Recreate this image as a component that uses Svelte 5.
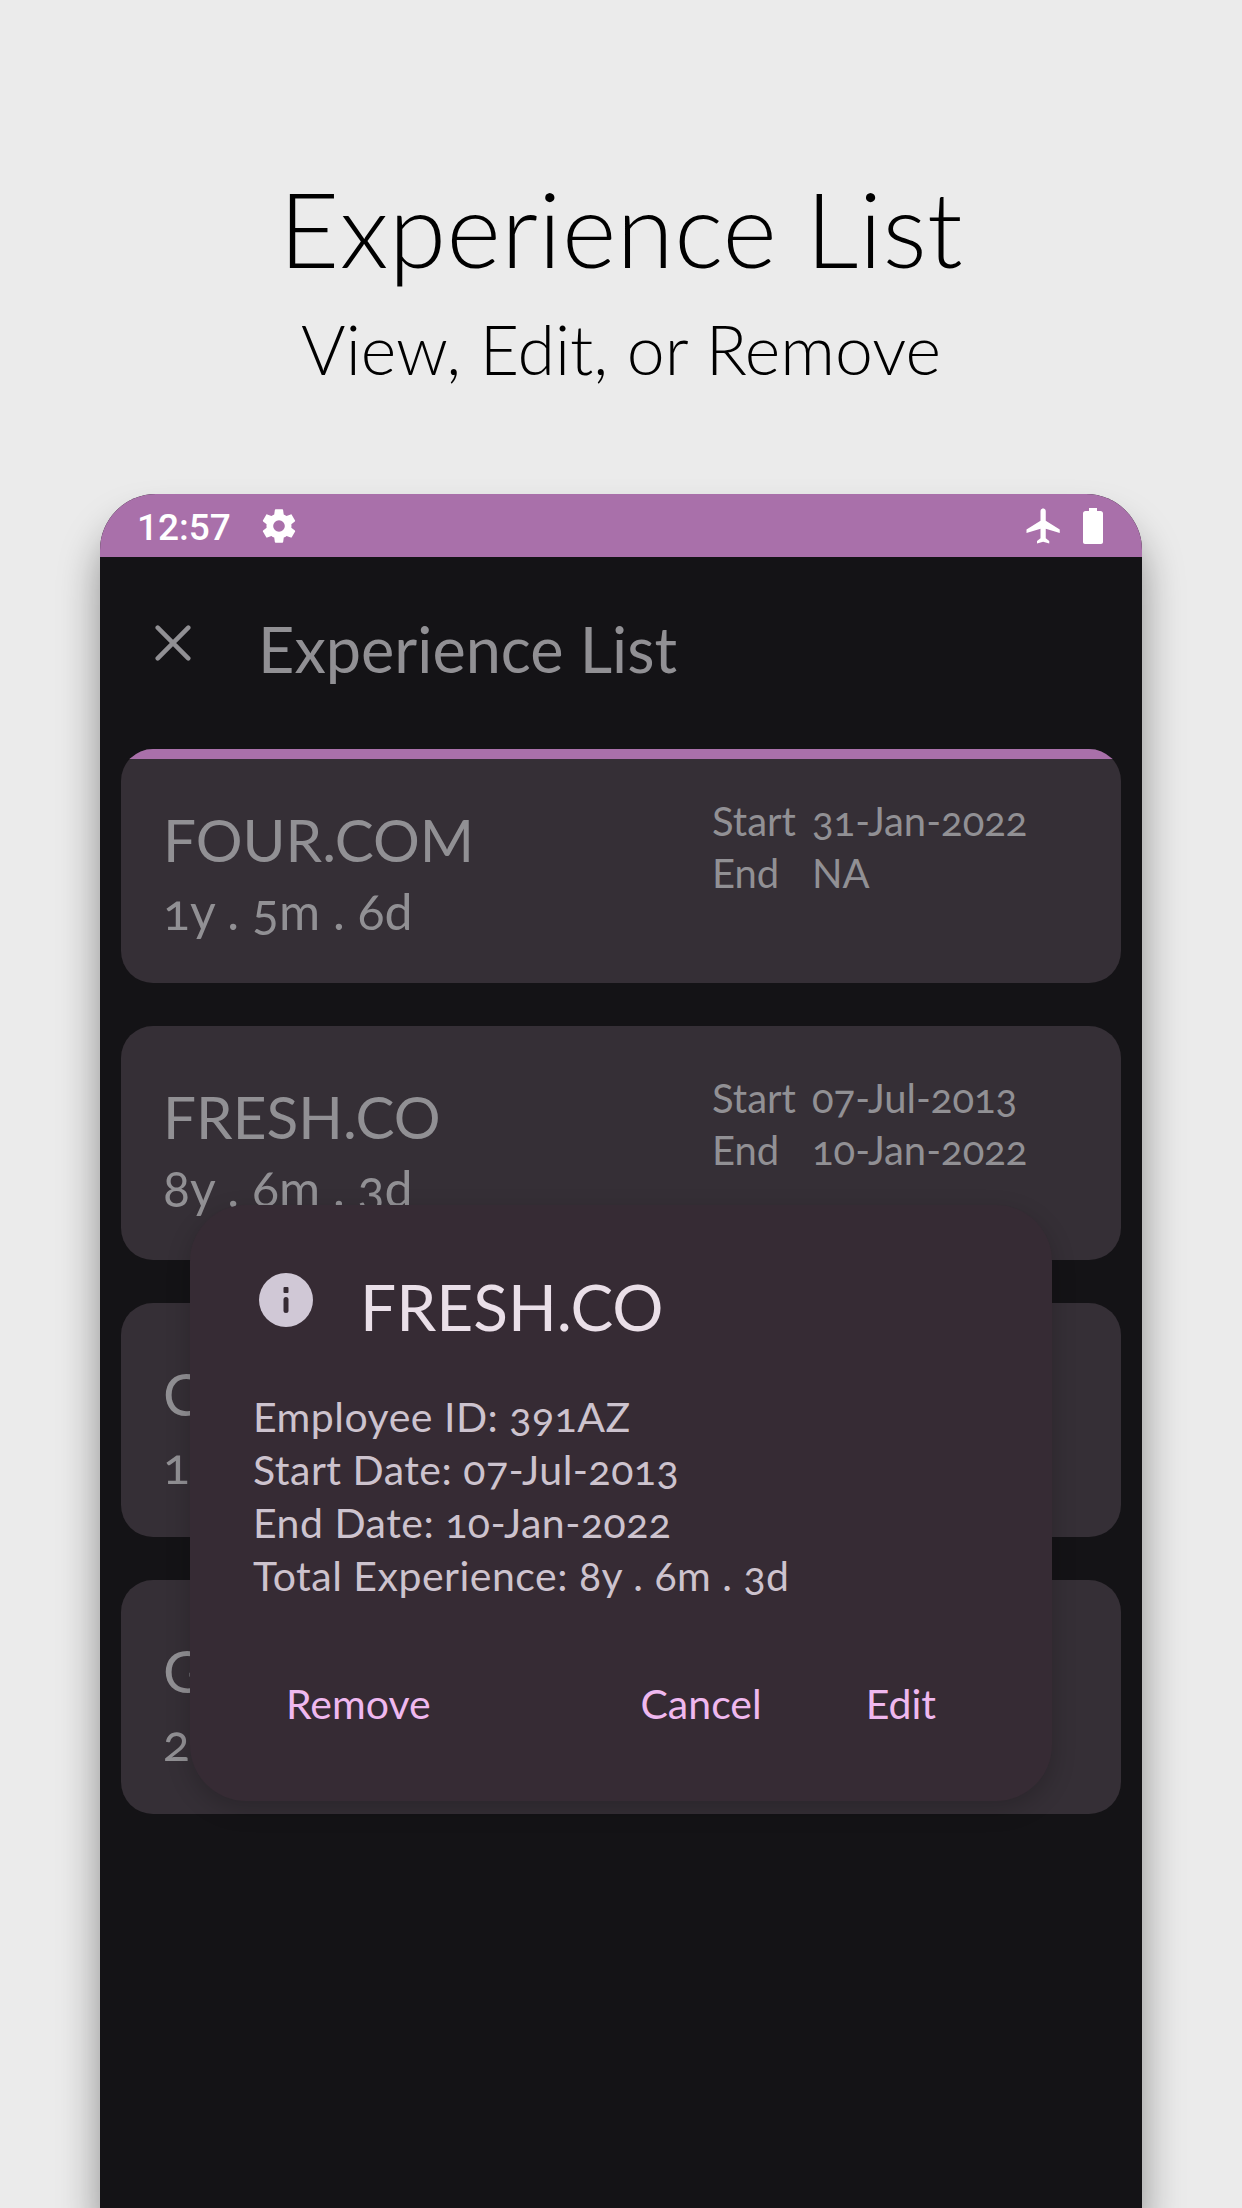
<script>
	const jobs = [
		{ name: 'FOUR.COM', span: '1y . 5m . 6d', start: '31-Jan-2022', end: 'NA', current: true },
		{ name: 'FRESH.CO', span: '8y . 6m . 3d', start: '07-Jul-2013', end: '10-Jan-2022' },
		{ name: 'CORE.IO', span: '1y . 2m . 4d', start: '02-May-2012', end: '06-Jul-2013' },
		{ name: 'GRID.NET', span: '2y . 1m . 9d', start: '20-Mar-2010', end: '29-Apr-2012' }
	];
</script>

<main class="page">
	<header class="hero">
		<h1>Experience List</h1>
		<p>View, Edit, or Remove</p>
	</header>

	<section class="phone">
		<div class="status">
			<span class="time">12:57</span>
			<svg class="gear" viewBox="0 0 24 24"><path d="M19.4 13c.04-.32.07-.66.07-1s-.03-.68-.07-1l2.1-1.65c.19-.15.24-.42.12-.64l-2-3.46c-.12-.22-.38-.3-.6-.22l-2.49 1c-.52-.4-1.08-.73-1.69-.98l-.38-2.65A.49.49 0 0 0 14 2h-4c-.25 0-.46.18-.49.42l-.38 2.65c-.61.25-1.17.59-1.69.98l-2.49-1c-.23-.09-.49 0-.61.22l-2 3.46c-.13.22-.07.49.12.64L4.57 11c-.04.32-.07.65-.07 1s.03.68.07 1l-2.11 1.65c-.19.15-.24.42-.12.64l2 3.46c.12.22.38.3.61.22l2.49-1c.52.4 1.08.73 1.69.98l.38 2.65c.03.24.24.42.49.42h4c.25 0 .46-.18.49-.42l.38-2.65c.61-.25 1.17-.59 1.69-.98l2.49 1c.23.09.49 0 .61-.22l2-3.46c.12-.22.07-.49-.12-.64L19.4 13zM12 15.5a3.5 3.5 0 1 1 0-7 3.5 3.5 0 0 1 0 7z"/></svg>
			<span class="spacer"></span>
			<svg class="plane" viewBox="0 0 24 24"><path d="M21 16v-2l-8-5V3.5c0-.83-.67-1.5-1.5-1.5S10 2.670 10 3.500V9l-8 5v2l8-2.500V19l-2 1.500V22l3.500-1 3.500 1v-1.500L13 19v-5.500l8 2.500z"/></svg>
			<svg class="battery" viewBox="0 0 20 36"><path d="M6 0h8v3h3.500C19 3 20 4 20 5.500V34c0 1.200-.8 2-2 2H2c-1.200 0-2-.8-2-2V5.500C0 4 1 3 2.500 3H6z"/></svg>
		</div>

		<div class="appbar">
			<svg class="close" viewBox="0 0 40 40"><path d="M3 3l34 34M37 3L3 37"/></svg>
			<h2>Experience List</h2>
		</div>

		<div class="list">
			{#each jobs as job (job.name)}
				<article class="card" class:current={job.current}>
					<div class="who">
						<h3>{job.name}</h3>
						<p>{job.span}</p>
					</div>
					<dl>
						<dt>Start</dt><dd>{job.start}</dd>
						<dt>End</dt><dd>{job.end}</dd>
					</dl>
				</article>
			{/each}
		</div>

		<div class="dialog">
			<div class="dialog-head">
				<svg class="info" viewBox="0 0 54 54"><circle cx="27" cy="27" r="27"/><rect class="dot" x="24.500" y="14" width="5" height="6" rx="1"/><rect class="dot" x="24.500" y="24" width="5" height="16" rx="2.500"/></svg>
				<h4>FRESH.CO</h4>
			</div>
			<div class="dialog-body">
				<p>Employee ID: 391AZ</p>
				<p>Start Date: 07-Jul-2013</p>
				<p>End Date: 10-Jan-2022</p>
				<p>Total Experience: 8y . 6m . 3d</p>
			</div>
			<div class="actions">
				<button>Remove</button>
				<span class="spacer"></span>
				<button>Cancel</button>
				<button>Edit</button>
			</div>
		</div>
	</section>
</main>

<style>
	:global(body) {
		margin: 0;
		background: #ebebeb;
	}

	.page {
		height: 2208px;
		overflow: hidden;
		display: flex;
		flex-direction: column;
		align-items: center;
		font-family: Lato, "Open Sans", sans-serif;
		font-variant-numeric: oldstyle-nums;
	}

	.hero {
		height: 494px;
		box-sizing: border-box;
		padding-top: 168px;
		text-align: center;
	}

	.hero h1 {
		margin: 0;
		font-size: 104px;
		font-weight: 300;
		line-height: 120px;
		letter-spacing: 0.4px;
		color: #000;
	}

	.hero p {
		margin: 0;
		font-size: 68px;
		font-weight: 300;
		line-height: 90px;
		padding-top: 16px;
		color: #000;
	}

	.phone {
		position: relative;
		width: 1042px;
		flex: 1;
		background: #141316;
		border-radius: 56px 56px 0 0;
		box-shadow: 0 30px 40px rgba(0, 0, 0, 0.4);
	}

	.status {
		height: 63px;
		display: flex;
		align-items: center;
		padding: 0 39px 0 37px;
		background: #a970aa;
		border-radius: 56px 56px 0 0;
		color: #fff;
	}

	.time {
		padding-top: 3px;
		font-family: Roboto, sans-serif;
		font-size: 37px;
		font-weight: 500;
		font-variant-numeric: normal;
	}

	.gear {
		width: 40px;
		height: 40px;
		margin-left: 28px;
		fill: #fff;
	}

	.spacer {
		flex: 1;
	}

	.plane {
		width: 42px;
		height: 42px;
		fill: #fff;
	}

	.battery {
		width: 20px;
		height: 36px;
		margin-left: 18px;
		fill: #fff;
	}

	.appbar {
		height: 192px;
		display: flex;
		align-items: center;
		padding-left: 55px;
		gap: 67px;
	}

	.close {
		width: 36px;
		height: 36px;
		margin-top: -20px;
		fill: none;
		stroke: #919094;
		stroke-width: 5;
		stroke-linecap: round;
	}

	.appbar h2 {
		margin: -10px 0 0;
		font-size: 63px;
		font-weight: 400;
		color: #919094;
	}

	.list {
		display: flex;
		flex-direction: column;
		gap: 43px;
		padding: 0 21px;
	}

	.card {
		position: relative;
		height: 234px;
		box-sizing: border-box;
		padding: 54px 42px 0;
		display: flex;
		overflow: hidden;
		background: #352f36;
		border-radius: 32px;
	}

	.card.current::before {
		content: '';
		position: absolute;
		inset: 0 0 auto;
		height: 10px;
		background: #a970aa;
	}

	.who {
		width: 549px;
	}

	.who h3 {
		margin: 0;
		font-size: 58.500px;
		font-weight: 400;
		line-height: 72px;
		color: #919094;
	}

	.who p {
		margin: 4px 0 0;
		font-size: 50px;
		line-height: 64px;
		color: #919094;
	}

	dl {
		margin: -8px 0 0;
		display: grid;
		grid-template-columns: 100px auto;
		grid-auto-rows: 52px;
		font-size: 40px;
		line-height: 52px;
		color: #919094;
	}

	dd {
		margin: 0;
	}

	.dialog {
		position: absolute;
		left: 90px;
		top: 711px;
		width: 862px;
		height: 596px;
		box-sizing: border-box;
		padding: 62px 0 0 64px;
		background: #362b34;
		border-radius: 56px;
		box-shadow: 0 8px 24px rgba(0, 0, 0, 0.2);
	}

	.dialog-head {
		display: flex;
		align-items: flex-start;
		gap: 47px;
		padding-left: 5px;
	}

	.info {
		width: 54px;
		height: 54px;
		margin-top: 6px;
		fill: #d0c8d6;
	}

	.info .dot {
		fill: #362b34;
	}

	.dialog-head h4 {
		margin: 0;
		font-size: 64px;
		font-weight: 400;
		line-height: 80px;
		color: #eadfe8;
	}

	.dialog-body {
		margin-top: 43px;
		margin-left: -1px;
		font-size: 41px;
		line-height: 53px;
		letter-spacing: 0.5px;
		color: #cdc3ce;
	}

	.dialog-body p {
		margin: 0;
	}

	.actions {
		display: flex;
		gap: 104px;
		margin-top: 77px;
		padding: 0 116px 0 32px;
	}

	.actions .spacer {
		margin-right: -104px;
	}

	button {
		padding: 0;
		background: none;
		border: 0;
		font: inherit;
		font-size: 41px;
		color: #efb8ef;
	}
</style>
